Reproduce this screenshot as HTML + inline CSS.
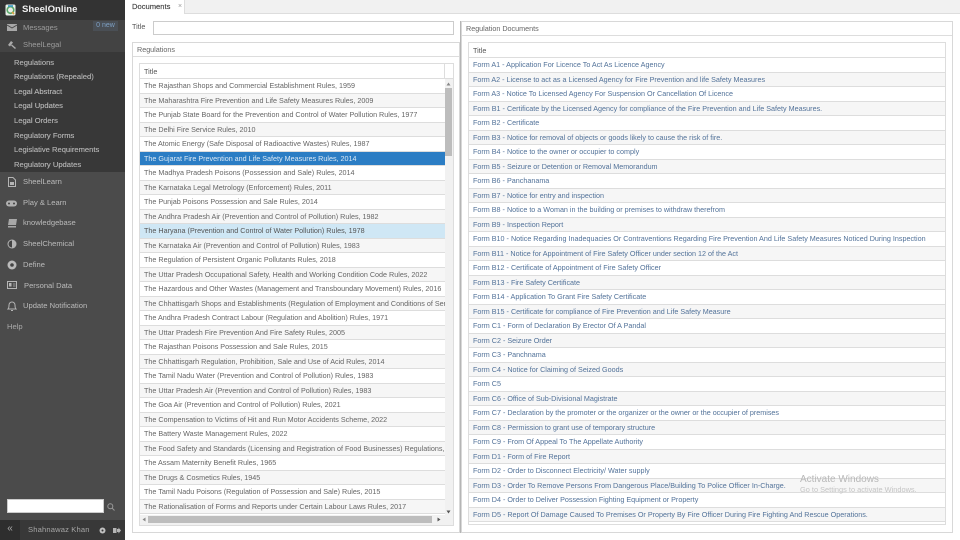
<!DOCTYPE html>
<html><head><meta charset="utf-8"><title>SheelOnline</title>
<style>
*{box-sizing:border-box}
html,body{margin:0;padding:0;width:960px;height:540px;overflow:hidden;background:#fff;font-family:"Liberation Sans",sans-serif;font-size:7.2px;color:#555}
#wrap{position:absolute;left:0;top:0;width:960px;height:540px;filter:blur(.25px)}
#side{position:absolute;left:0;top:0;width:125px;height:540px;background:#4b4b4b;color:#c4c4c4}
#side div{position:absolute;white-space:nowrap}
.top{left:0;top:0;width:125px;height:20px;background:#333}
.sub{left:0;top:52px;width:125px;height:120px;background:#383838}
.msg{left:0;top:20px;width:125px;height:32px;background:#434343}
.m{left:23px;font-size:7.6px;color:#bbb;line-height:10px}
.s{left:14px;font-size:7.6px;color:#b8b8b8;line-height:10px;-webkit-text-stroke:.12px #b8b8b8}
#side svg{position:absolute}
.panel{position:absolute;border:1px solid #d8d8d8;background:#fff}
.ph{position:absolute;left:0;right:0;top:0;height:14px;border-bottom:1px solid #ddd;line-height:13px;padding-left:4px;color:#666;font-size:7.2px}
.grid{position:absolute;border:1px solid #ddd;overflow:hidden;background:#fff}
.h{height:15px;line-height:15px;padding-left:4px;border-bottom:1px solid #ddd;color:#555;background:#fff}
.r{height:14.5px;line-height:14px;padding-left:4px;white-space:nowrap;overflow:hidden;border-bottom:1px solid #ddd;color:#666}
.list .r:nth-child(even){background:#f6f6f6}
.blue .r:nth-child(odd){background:#f6f6f6}
.blue .r{color:#527299}
.r.sel{background:#2b7dc4!important;color:#dbe9f5}
.r.hov{background:#cfe7f5!important;color:#555}
</style></head><body>
<div id="wrap">
<div id="side">
<div class="top"></div><div class="msg"></div><div class="sub"></div>
<svg style="left:5px;top:4px" width="11" height="12" viewBox="0 0 11 12"><rect x="0.5" y="0.5" width="10" height="11" rx="1.5" fill="#e8efe8"/><circle cx="5.5" cy="6" r="3.3" fill="none" stroke="#5aa86a" stroke-width="1.6"/><path d="M3 2h5" stroke="#3c9ac8" stroke-width="1.6"/><path d="M7 8l2 2" stroke="#d8a040" stroke-width="1.6"/></svg>
<div style="left:22px;top:4px;font-size:9.6px;line-height:12px;font-weight:bold;color:#f0f0f0">SheelOnline</div>
<svg style="left:7px;top:24px" width="10" height="7" viewBox="0 0 10 7"><rect width="10" height="7" fill="#a8a8a8"/><path d="M0 1l5 3 5-3" fill="none" stroke="#444" stroke-width=".8"/></svg>
<div class="m" style="top:23px;color:#9c9c9c">Messages</div>
<div style="left:93px;top:21px;width:25px;height:10px;background:#4a4f55;color:#7ea0c4;font-size:7px;line-height:9px;text-align:center">0 new</div>
<svg style="left:7px;top:40px" width="10" height="9" viewBox="0 0 10 9"><path d="M1 5l3-4 2 1.500-3 4zM5 4.500l4 3.500-1 1-4-3.500z" fill="#aaa"/></svg>
<div class="m" style="top:40px;color:#9c9c9c">SheelLegal</div>
<div class="s" style="top:58px">Regulations</div>
<div class="s" style="top:72px">Regulations (Repealed)</div>
<div class="s" style="top:87px">Legal Abstract</div>
<div class="s" style="top:101px">Legal Updates</div>
<div class="s" style="top:116px">Legal Orders</div>
<div class="s" style="top:131px">Regulatory Forms</div>
<div class="s" style="top:145px">Legislative Requirements</div>
<div class="s" style="top:160px">Regulatory Updates</div>
<svg style="left:8px;top:177px" width="8" height="10" viewBox="0 0 8 10"><path d="M.5.500h4.500l2.500 2.500v6.500h-7z" fill="none" stroke="#b5b5b5"/><rect x="2" y="5" width="4" height="3" fill="#b5b5b5"/></svg>
<div class="m" style="top:177px">SheelLearn</div>
<svg style="left:6px;top:200px" width="11" height="7" viewBox="0 0 11 7"><rect width="11" height="6" y=".5" rx="3" fill="#b0b0b0"/><circle cx="3" cy="3.500" r="1" fill="#444"/><circle cx="8" cy="3.500" r="1" fill="#444"/></svg>
<div class="m" style="top:198px">Play &amp; Learn</div>
<svg style="left:7px;top:219px" width="10" height="9" viewBox="0 0 10 9"><path d="M2 0h8l-1 6H1zM1 7h8v1.500H1z" fill="#a8a8a8"/></svg>
<div class="m" style="top:218px">knowledgebase</div>
<svg style="left:7px;top:239px" width="10" height="10" viewBox="0 0 10 10"><circle cx="5" cy="5" r="4.500" fill="#b5b5b5"/><path d="M5 1.500a3.500 3.500 0 0 0 0 7z" fill="#444"/></svg>
<div class="m" style="top:239px">SheelChemical</div>
<svg style="left:7px;top:260px" width="10" height="10" viewBox="0 0 10 10"><circle cx="5" cy="5" r="4.500" fill="#bbb"/><circle cx="5" cy="5" r="1.800" fill="#444"/></svg>
<div class="m" style="top:260px">Define</div>
<svg style="left:7px;top:281px" width="10" height="8" viewBox="0 0 10 8"><rect x=".5" y=".5" width="9" height="7" fill="none" stroke="#b5b5b5"/><rect x="2" y="2" width="2.500" height="3.500" fill="#b5b5b5"/><path d="M6 3h2.500M6 5h2.500" stroke="#b5b5b5" stroke-width=".8"/></svg>
<div class="m" style="top:281px;left:24px">Personal Data</div>
<svg style="left:7px;top:301px" width="10" height="11" viewBox="0 0 10 11"><path d="M1 8c1-1 1-2 1-4a3 3 0 0 1 6 0c0 2 0 3 1 4zM4 9.500h2" fill="none" stroke="#b5b5b5"/></svg>
<div class="m" style="top:301px">Update Notification</div>
<div class="m" style="left:7px;top:322px;color:#aaa">Help</div>
<div style="left:7px;top:499px;width:97px;height:14px;background:#fff;border:1px solid #ccc"></div>
<svg style="left:107px;top:503px" width="8" height="8" viewBox="0 0 8 8"><circle cx="3.300" cy="3.300" r="2.500" fill="none" stroke="#999"/><path d="M5 5l2.500 2.500" stroke="#999"/></svg>
<div style="left:0;top:520px;width:125px;height:20px;background:#383838"></div>
<div style="left:0;top:520px;width:20px;height:20px;background:#2e2e2e;color:#aaa;font-size:10px;line-height:18px;text-align:center">«</div>
<div style="left:28px;top:525px;font-size:7.6px;line-height:10px;color:#a5a5a5;letter-spacing:.15px">Shahnawaz Khan</div>
<svg style="left:99px;top:527px" width="7" height="7" viewBox="0 0 7 7"><circle cx="3.500" cy="3.500" r="3" fill="#c0c0c0"/><circle cx="3.500" cy="3.500" r="1" fill="#333"/></svg>
<svg style="left:113px;top:527px" width="8" height="7" viewBox="0 0 8 7"><path d="M0 1h3.500v5H0zM4 2h1.500V0.500L8 3.500 5.500 6.500V5H4z" fill="#b5b5b5"/></svg>
</div>

<div style="position:absolute;left:125px;top:0;width:835px;height:14px;background:#f1f1f1;border-bottom:1px solid #ddd"></div>
<div style="position:absolute;left:125px;top:0;width:60px;height:14px;background:#fff;border-right:1px solid #ddd;line-height:13px;padding-left:7px;color:#444;font-size:7.6px;-webkit-text-stroke:.15px #444">Documents<span style="position:absolute;left:53px;top:0;color:#999;font-size:7px;-webkit-text-stroke:0">×</span></div>

<div style="position:absolute;left:132px;top:21px;line-height:11px;color:#555">Title</div>
<div style="position:absolute;left:153px;top:21px;width:301px;height:14px;border:1px solid #ccc;background:#fff"></div>

<div class="panel" style="left:132px;top:42px;width:328px;height:491px">
<div class="ph">Regulations</div>
<div class="grid" style="left:6px;top:20px;width:315px;height:463px">
<div class="h">Title</div>
<div style="position:absolute;left:304px;top:0;width:1px;height:15px;background:#ddd"></div>
<div class="list" style="width:305px;height:438px;overflow:hidden">
<div class="r">The Rajasthan Shops and Commercial Establishment Rules, 1959</div>
<div class="r">The Maharashtra Fire Prevention and Life Safety Measures Rules, 2009</div>
<div class="r">The Punjab State Board for the Prevention and Control of Water Pollution Rules, 1977</div>
<div class="r">The Delhi Fire Service Rules, 2010</div>
<div class="r">The Atomic Energy (Safe Disposal of Radioactive Wastes) Rules, 1987</div>
<div class="r sel">The Gujarat Fire Prevention and Life Safety Measures Rules, 2014</div>
<div class="r">The Madhya Pradesh Poisons (Possession and Sale) Rules, 2014</div>
<div class="r">The Karnataka Legal Metrology (Enforcement) Rules, 2011</div>
<div class="r">The Punjab Poisons Possession and Sale Rules, 2014</div>
<div class="r">The Andhra Pradesh Air (Prevention and Control of Pollution) Rules, 1982</div>
<div class="r hov">The Haryana (Prevention and Control of Water Pollution) Rules, 1978</div>
<div class="r">The Karnataka Air (Prevention and Control of Pollution) Rules, 1983</div>
<div class="r">The Regulation of Persistent Organic Pollutants Rules, 2018</div>
<div class="r">The Uttar Pradesh Occupational Safety, Health and Working Condition Code Rules, 2022</div>
<div class="r">The Hazardous and Other Wastes (Management and Transboundary Movement) Rules, 2016</div>
<div class="r">The Chhattisgarh Shops and Establishments (Regulation of Employment and Conditions of Service) Rules</div>
<div class="r">The Andhra Pradesh Contract Labour (Regulation and Abolition) Rules, 1971</div>
<div class="r">The Uttar Pradesh Fire Prevention And Fire Safety Rules, 2005</div>
<div class="r">The Rajasthan Poisons Possession and Sale Rules, 2015</div>
<div class="r">The Chhattisgarh Regulation, Prohibition, Sale and Use of Acid Rules, 2014</div>
<div class="r">The Tamil Nadu Water (Prevention and Control of Pollution) Rules, 1983</div>
<div class="r">The Uttar Pradesh Air (Prevention and Control of Pollution) Rules, 1983</div>
<div class="r">The Goa Air (Prevention and Control of Pollution) Rules, 2021</div>
<div class="r">The Compensation to Victims of Hit and Run Motor Accidents Scheme, 2022</div>
<div class="r">The Battery Waste Management Rules, 2022</div>
<div class="r">The Food Safety and Standards (Licensing and Registration of Food Businesses) Regulations, 2011</div>
<div class="r">The Assam Maternity Benefit Rules, 1965</div>
<div class="r">The Drugs &amp; Cosmetics Rules, 1945</div>
<div class="r">The Tamil Nadu Poisons (Regulation of Possession and Sale) Rules, 2015</div>
<div class="r">The Rationalisation of Forms and Reports under Certain Labour Laws Rules, 2017</div>
</div>
<div style="position:absolute;left:305px;top:15px;width:8px;height:447px;background:#f1f1f1"></div>
<div style="position:absolute;left:305px;top:24px;width:7px;height:68px;background:#bdbdbd"></div>
<svg style="position:absolute;left:306px;top:18px" width="5" height="4" viewBox="0 0 5 4"><path d="M2.500 0.500L4.500 3.500H.5z" fill="#888"/></svg>
<svg style="position:absolute;left:306px;top:446px" width="5" height="4" viewBox="0 0 5 4"><path d="M2.500 3.500L4.500 .5H.5z" fill="#555"/></svg>
<div style="position:absolute;left:0;top:451px;width:305px;height:11px;background:#f1f1f1"></div>
<div style="position:absolute;left:8px;top:452px;width:284px;height:7px;background:#bdbdbd"></div>
<svg style="position:absolute;left:2px;top:453px" width="4" height="5" viewBox="0 0 4 5"><path d="M.5 2.500L3.500 .5V4.500z" fill="#888"/></svg>
<svg style="position:absolute;left:297px;top:453px" width="4" height="5" viewBox="0 0 4 5"><path d="M3.500 2.500L.5 .5V4.500z" fill="#555"/></svg>
</div>
</div>
<div style="position:absolute;left:460px;top:21px;width:1px;height:512px;background:#b5b5b5"></div>

<div class="panel blue" style="left:461px;top:21px;width:492px;height:512px">
<div class="ph">Regulation Documents</div>
<div class="grid" style="left:6px;top:20px;width:478px;height:483px">
<div class="h">Title</div>
<div class="r">Form A1 - Application For Licence To Act As Licence Agency</div>
<div class="r">Form A2 - License to act as a Licensed Agency for Fire Prevention and life Safety Measures</div>
<div class="r">Form A3 - Notice To Licensed Agency For Suspension Or Cancellation Of Licence</div>
<div class="r">Form B1 - Certificate by the Licensed Agency for compliance of the Fire Prevention and Life Safety Measures.</div>
<div class="r">Form B2 - Certificate</div>
<div class="r">Form B3 - Notice for removal of objects or goods likely to cause the risk of fire.</div>
<div class="r">Form B4 - Notice to the owner or occupier to comply</div>
<div class="r">Form B5 - Seizure or Detention or Removal Memorandum</div>
<div class="r">Form B6 - Panchanama</div>
<div class="r">Form B7 - Notice for entry and inspection</div>
<div class="r">Form B8 - Notice to a Woman in the building or premises to withdraw therefrom</div>
<div class="r">Form B9 - Inspection Report</div>
<div class="r">Form B10 - Notice Regarding Inadequacies Or Contraventions Regarding Fire Prevention And Life Safety Measures Noticed During Inspection</div>
<div class="r">Form B11 - Notice for Appointment of Fire Safety Officer under section 12 of the Act</div>
<div class="r">Form B12 - Certificate of Appointment of Fire Safety Officer</div>
<div class="r">Form B13 - Fire Safety Certificate</div>
<div class="r">Form B14 - Application To Grant Fire Safety Certificate</div>
<div class="r">Form B15 - Certificate for compliance of Fire Prevention and Life Safety Measure</div>
<div class="r">Form C1 - Form of Declaration By Erector Of A Pandal</div>
<div class="r">Form C2 - Seizure Order</div>
<div class="r">Form C3 - Panchnama</div>
<div class="r">Form C4 - Notice for Claiming of Seized Goods</div>
<div class="r">Form C5</div>
<div class="r">Form C6 - Office of Sub-Divisional Magistrate</div>
<div class="r">Form C7 - Declaration by the promoter or the organizer or the owner or the occupier of premises</div>
<div class="r">Form C8 - Permission to grant use of temporary structure</div>
<div class="r">Form C9 - From Of Appeal To The Appellate Authority</div>
<div class="r">Form D1 - Form of Fire Report</div>
<div class="r">Form D2 - Order to Disconnect Electricity/ Water supply</div>
<div class="r">Form D3 - Order To Remove Persons From Dangerous Place/Building To Police Officer In-Charge.</div>
<div class="r">Form D4 - Order to Deliver Possession Fighting Equipment or Property</div>
<div class="r">Form D5 - Report Of Damage Caused To Premises Or Property By Fire Officer During Fire Fighting And Rescue Operations.</div>
</div>
</div>

<div style="position:absolute;left:800px;top:474px;font-size:10px;line-height:12px;color:#b8b8b8">Activate Windows</div>
<div style="position:absolute;left:800px;top:485px;font-size:7.4px;line-height:10px;color:#c4c4c4">Go to Settings to activate Windows.</div>
</div>
</body></html>
